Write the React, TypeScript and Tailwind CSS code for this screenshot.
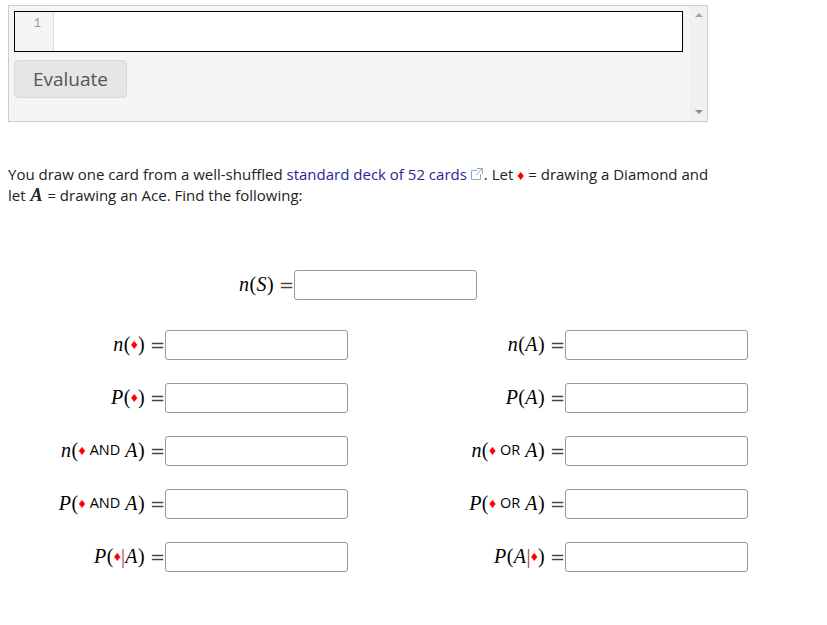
const Diamond = () => (
  <span className="font-['Liberation_Sans',sans-serif] not-italic tracking-normal text-[#ff0000] text-[14px] leading-none">♦</span>
);

const I = ({ children }: { children: React.ReactNode }) => <span className="italic">{children}</span>;
const T = ({ children }: { children: React.ReactNode }) => (
  <span className="font-['Open_Sans',sans-serif] not-italic text-[14.5px] tracking-normal ml-[4px] mr-[5px]">{children}</span>
);

function Answer({ children }: { children: React.ReactNode }) {
  return (
    <div className="flex items-center justify-end h-[30px]">
      <span className="font-['Liberation_Serif',serif] text-[20px] tracking-[0.4px] text-black whitespace-nowrap flex items-center pb-[2px]">{children}</span>
      <span className="font-['DejaVu_Sans',sans-serif] text-[18px] leading-none text-[#444] ml-[5px] -mr-[1px] w-[16px]">=</span>
      <input className="w-[183px] h-[30px] bg-white border border-[#999] rounded-[3px] shrink-0" />
    </div>
  );
}

const n = <I>n</I>;
const P = <I>P</I>;
const A = <I>A</I>;

export default function App() {
  return (
    <div className="min-h-[625px] bg-white pl-2 pt-[5px] font-['Open_Sans',sans-serif] text-[15px] text-[#222]">
      <section className="w-[700px] h-[117px] bg-[#f5f5f5] border border-[#ccc] flex">
        <div className="flex-1 pl-[5px] pt-[5px]">
          <div className="h-[41px] border border-black flex bg-white">
            <div className="w-[39px] bg-[#f5f5f5] border-r border-[#ddd] flex justify-end pr-[12px] pt-[5px] font-['Liberation_Mono',monospace] text-[12px] leading-[14px] text-[#7d9f9f]">1</div>
            <div className="flex-1" />
          </div>
          <button className="mt-2 w-[113px] h-[38px] bg-[#e6e6e6] border border-[#d9d9d9] rounded-[4px] text-[19px] text-[#555]">Evaluate</button>
        </div>
        <div className="w-[17px] bg-[#f0f0f0] flex flex-col items-center justify-between py-[7px] ml-[7px]">
          <div className="w-0 h-0 border-x-[4px] border-x-transparent border-b-[4px] border-b-[#a3a3a3]" />
          <div className="w-0 h-0 border-x-[4px] border-x-transparent border-t-[4px] border-t-[#8a8a8a]" />
        </div>
      </section>

      <div className="w-[705px] mt-[41px] h-[44px] text-[15px] whitespace-nowrap">
        <p className="leading-[22px]">
          You draw one card from a well-shuffled{" "}
          <a className="text-[#26269a]">standard deck of 52 cards</a>
          <svg className="inline-block ml-[3px] align-[-1px]" width="14" height="14" viewBox="0 0 14 14" fill="none" stroke="#8fa9c4" strokeWidth="1">
            <path d="M7 3.5H1.5V12.5H10.5V7" />
            <path d="M7 1.5H12.5V7M12.5 1.5L6 8" />
          </svg>
          . Let <Diamond /> = drawing a Diamond and
        </p>
        <p className="leading-[21px]">
          let{" "}
          <span className="font-['Liberation_Serif',serif] italic font-bold text-[18px] leading-[0] mx-[1px]">A</span>{" "}
          = drawing an Ace. Find the following:
        </p>
      </div>

      <div className="w-[469px] mt-[63px]">
        <Answer>{n}(<I>S</I>)</Answer>
      </div>

      <div className="mt-[30px] grid grid-cols-[340px_400px] gap-y-[23px]">
        <Answer>{n}(<Diamond />)</Answer>
        <Answer>{n}({A})</Answer>
        <Answer>{P}(<Diamond />)</Answer>
        <Answer>{P}({A})</Answer>
        <Answer>{n}(<Diamond /><T>AND</T>{A})</Answer>
        <Answer>{n}(<Diamond /><T>OR</T>{A})</Answer>
        <Answer>{P}(<Diamond /><T>AND</T>{A})</Answer>
        <Answer>{P}(<Diamond /><T>OR</T>{A})</Answer>
        <Answer>{P}(<Diamond /><span className="text-[#a33]">|</span>{A})</Answer>
        <Answer>{P}({A}<span className="text-[#a33]">|</span><Diamond />)</Answer>
      </div>
    </div>
  );
}
